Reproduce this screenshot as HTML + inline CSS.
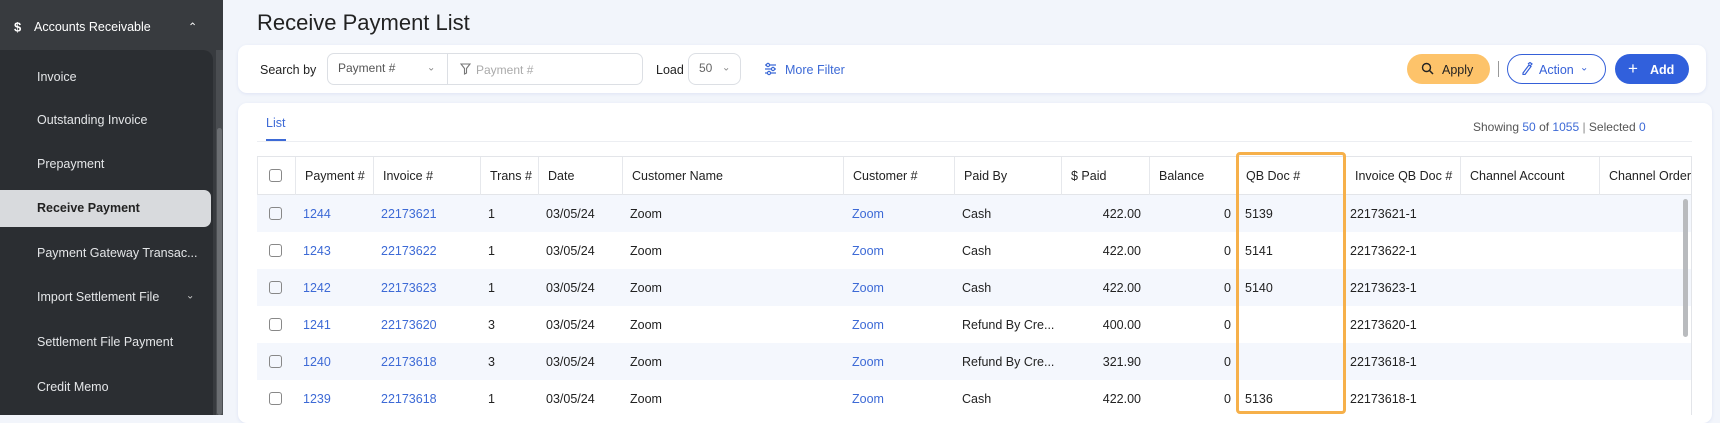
<!DOCTYPE html>
<html><head><meta charset="utf-8"><style>
*{box-sizing:border-box;margin:0;padding:0}
body{width:1720px;height:415px;overflow:hidden;background:#f2f5fb;font-family:"Liberation Sans",sans-serif;font-size:12.5px;color:#222;position:relative}
.abs{position:absolute}
.side{left:0;top:0;width:223px;height:415px;background:#383b3f}
.sub{left:0;top:50px;width:213px;height:365px;background:#2b2e32;border-radius:0 10px 0 0}
.sitem{position:absolute;left:37px;color:#e4e6e8;font-size:12.5px;transform:translateY(-50%)}
.track{left:216px;top:50px;width:7px;height:365px;background:#4a4d51}
.thumb{left:217px;top:128px;width:5px;height:287px;background:#6b6e72;border-radius:3px}
.card{background:#fff;border-radius:9px;box-shadow:0 1px 3px rgba(80,110,200,.12)}
.t{position:absolute;transform:translateY(-50%);white-space:nowrap}
.blue{color:#3d6ad6}
.hd{position:absolute;top:157px;height:38px;border-left:1px solid #e6e8ec;padding-left:9px;line-height:38px;font-size:12.5px;color:#222;white-space:nowrap;overflow:hidden}
.cb{position:absolute;width:13px;height:13px;border:1.5px solid #888;border-radius:3px}
</style></head><body>
<div class="abs side"></div>
<div class="abs sub"></div>
<div class="abs track"></div><div class="abs thumb"></div>
<div class="t" style="left:14px;top:27px;color:#fff;font-size:13px;font-weight:bold">$</div>
<div class="t" style="left:34px;top:27px;color:#fff;font-size:12.5px">Accounts Receivable</div>
<div class="t" style="left:188px;top:27px;color:#fff;font-size:11px">&#8963;</div>
<div class="abs" style="left:0;top:190px;width:211px;height:37px;background:#d8dadd;border-radius:0 7px 7px 0"></div>
<div class="sitem" style="top:77px">Invoice</div>
<div class="sitem" style="top:120px">Outstanding Invoice</div>
<div class="sitem" style="top:164px">Prepayment</div>
<div class="sitem" style="top:208px;color:#222;font-weight:bold">Receive Payment</div>
<div class="sitem" style="top:253px">Payment Gateway Transac...</div>
<div class="sitem" style="top:297px">Import Settlement File</div>
<div class="t" style="left:186px;top:296px;color:#ccc;font-size:10px">&#8964;</div>
<div class="sitem" style="top:342px">Settlement File Payment</div>
<div class="sitem" style="top:387px">Credit Memo</div>

<div class="t" style="left:257px;top:23px;font-size:22px;color:#222">Receive Payment List</div>

<div class="abs card" style="left:238px;top:45px;width:1468px;height:48px"></div>
<div class="t" style="left:260px;top:70px">Search by</div>
<div class="abs" style="left:327px;top:53px;width:121px;height:32px;border:1px solid #dcdfe4;border-radius:7px 0 0 7px"></div>
<div class="t" style="left:338px;top:68px;color:#555;font-size:12px">Payment #</div>
<div class="t" style="left:427px;top:68px;color:#888;font-size:10px">&#8964;</div>
<div class="abs" style="left:447px;top:53px;width:196px;height:32px;border:1px solid #dcdfe4;border-radius:0 7px 7px 0"></div>
<svg class="abs" style="left:460px;top:63px" width="11" height="12" viewBox="0 0 11 12"><path d="M1 1h9L6.5 5.5V10L4.5 11V5.5Z" fill="none" stroke="#777" stroke-width="1.1"/></svg>
<div class="t" style="left:476px;top:70px;color:#aaa;font-size:12px">Payment #</div>
<div class="t" style="left:656px;top:70px">Load</div>
<div class="abs" style="left:688px;top:53px;width:53px;height:32px;border:1px solid #dcdfe4;border-radius:8px"></div>
<div class="t" style="left:699px;top:68px;color:#666;font-size:12px">50</div>
<div class="t" style="left:722px;top:68px;color:#888;font-size:10px">&#8964;</div>
<svg class="abs" style="left:764px;top:62px" width="13" height="14" viewBox="0 0 13 14"><g stroke="#3d6ad6" stroke-width="1.2" fill="none"><path d="M1 3h11M1 7h11M1 11h11"/><circle cx="4" cy="3" r="1.6" fill="#fff"/><circle cx="9" cy="7" r="1.6" fill="#fff"/><circle cx="5" cy="11" r="1.6" fill="#fff"/></g></svg>
<div class="t blue" style="left:785px;top:70px">More Filter</div>
<div class="abs" style="left:1407px;top:54px;width:83px;height:30px;background:#fdc36a;border-radius:15px"></div>
<svg class="abs" style="left:1421px;top:62px" width="13" height="13" viewBox="0 0 13 13"><circle cx="5.5" cy="5.5" r="4" fill="none" stroke="#222" stroke-width="1.4"/><path d="M8.5 8.5L12 12" stroke="#222" stroke-width="1.5"/></svg>
<div class="t" style="left:1442px;top:70px;color:#222">Apply</div>
<div class="abs" style="left:1498px;top:61px;width:1px;height:16px;background:#999"></div>
<div class="abs" style="left:1507px;top:54px;width:99px;height:30px;border:1.5px solid #3560d8;border-radius:15px"></div>
<svg class="abs" style="left:1521px;top:62px" width="12" height="13" viewBox="0 0 12 13"><path d="M2 11L8 3l2 1.5L4 12.5H2Z M7 2l2-1.5 2 1.5-1.5 1.5" fill="none" stroke="#3560d8" stroke-width="1.2"/></svg>
<div class="t blue" style="left:1539px;top:70px;color:#3560d8">Action</div>
<div class="t" style="left:1580px;top:68px;color:#3560d8;font-size:10px">&#8964;</div>
<div class="abs" style="left:1615px;top:54px;width:74px;height:30px;background:#3160dc;border-radius:15px"></div>
<div class="t" style="left:1628px;top:69px;color:#fff;font-size:17px">+</div>
<div class="t" style="left:1650px;top:70px;color:#fff;font-weight:bold">Add</div>

<div class="abs card" style="left:238px;top:103px;width:1474px;height:320px"></div>
<div class="t blue" style="left:266px;top:123px">List</div>
<div class="abs" style="left:266px;top:139px;width:20px;height:2px;background:#3d6ad6"></div>
<div class="abs" style="left:257px;top:141px;width:1435px;height:1px;background:#eceef2"></div>
<div class="t" style="left:1473px;top:127px;color:#555;font-size:12px">Showing <span class="blue">50</span> of <span class="blue">1055</span> <span style="color:#888">|</span> Selected <span class="blue">0</span></div>

<div class="abs" style="left:257px;top:156px;width:1435px;height:1px;background:#e3e5e9"></div>
<div class="abs" style="left:257px;top:194px;width:1435px;height:1px;background:#e3e5e9"></div>
<div class="abs" style="left:257px;top:195px;width:1435px;height:37px;background:#f4f7fd"></div>
<div class="abs" style="left:257px;top:269px;width:1435px;height:37px;background:#f4f7fd"></div>
<div class="abs" style="left:257px;top:343px;width:1435px;height:37px;background:#f4f7fd"></div>
<div class="abs" style="left:1691px;top:156px;width:1px;height:259px;background:#e3e5e9"></div>
<div class="abs" style="left:1683px;top:199px;width:5px;height:138px;background:#b9bbbe;border-radius:3px"></div>

<div class="hd" style="left:257px;width:38px"></div>
<div class="cb" style="left:269px;top:169px"></div>
<div class="hd" style="left:295px;width:78px">Payment #</div>
<div class="hd" style="left:373px;width:107px">Invoice #</div>
<div class="hd" style="left:480px;width:58px">Trans #</div>
<div class="hd" style="left:538px;width:84px">Date</div>
<div class="hd" style="left:622px;width:221px">Customer Name</div>
<div class="hd" style="left:843px;width:111px">Customer #</div>
<div class="hd" style="left:954px;width:107px">Paid By</div>
<div class="hd" style="left:1061px;width:88px">$ Paid</div>
<div class="hd" style="left:1149px;width:87px">Balance</div>
<div class="hd" style="left:1236px;width:109px">QB Doc #</div>
<div class="hd" style="left:1345px;width:115px">Invoice QB Doc #</div>
<div class="hd" style="left:1460px;width:139px">Channel Account</div>
<div class="hd" style="left:1599px;width:92px">Channel Order I</div>

<div id="rows"></div>
<div class="abs" style="left:1236px;top:152px;width:110px;height:262px;border:3px solid #f6b04a;border-radius:4px"></div>
<script>
var d=[["1244","22173621","1","Cash","422.00","5139","22173621-1"],["1243","22173622","1","Cash","422.00","5141","22173622-1"],["1242","22173623","1","Cash","422.00","5140","22173623-1"],["1241","22173620","3","Refund By Cre...","400.00","","22173620-1"],["1240","22173618","3","Refund By Cre...","321.90","","22173618-1"],["1239","22173618","1","Cash","422.00","5136","22173618-1"]];
var h="";d.forEach(function(r,i){var y=214+i*37;
h+='<div class="cb" style="left:269px;top:'+(y-7)+'px"></div>';
h+='<div class="t blue" style="left:303px;top:'+y+'px">'+r[0]+'</div>';
h+='<div class="t blue" style="left:381px;top:'+y+'px">'+r[1]+'</div>';
h+='<div class="t" style="left:488px;top:'+y+'px">'+r[2]+'</div>';
h+='<div class="t" style="left:546px;top:'+y+'px">03/05/24</div>';
h+='<div class="t" style="left:630px;top:'+y+'px">Zoom</div>';
h+='<div class="t blue" style="left:852px;top:'+y+'px">Zoom</div>';
h+='<div class="t" style="left:962px;top:'+y+'px">'+r[3]+'</div>';
h+='<div class="t" style="left:1061px;width:80px;text-align:right;top:'+y+'px">'+r[4]+'</div>';
h+='<div class="t" style="left:1149px;width:82px;text-align:right;top:'+y+'px">0</div>';
h+='<div class="t" style="left:1245px;top:'+y+'px">'+r[5]+'</div>';
h+='<div class="t" style="left:1350px;top:'+y+'px">'+r[6]+'</div>';});
document.getElementById("rows").outerHTML=h;
</script>
</body></html>
